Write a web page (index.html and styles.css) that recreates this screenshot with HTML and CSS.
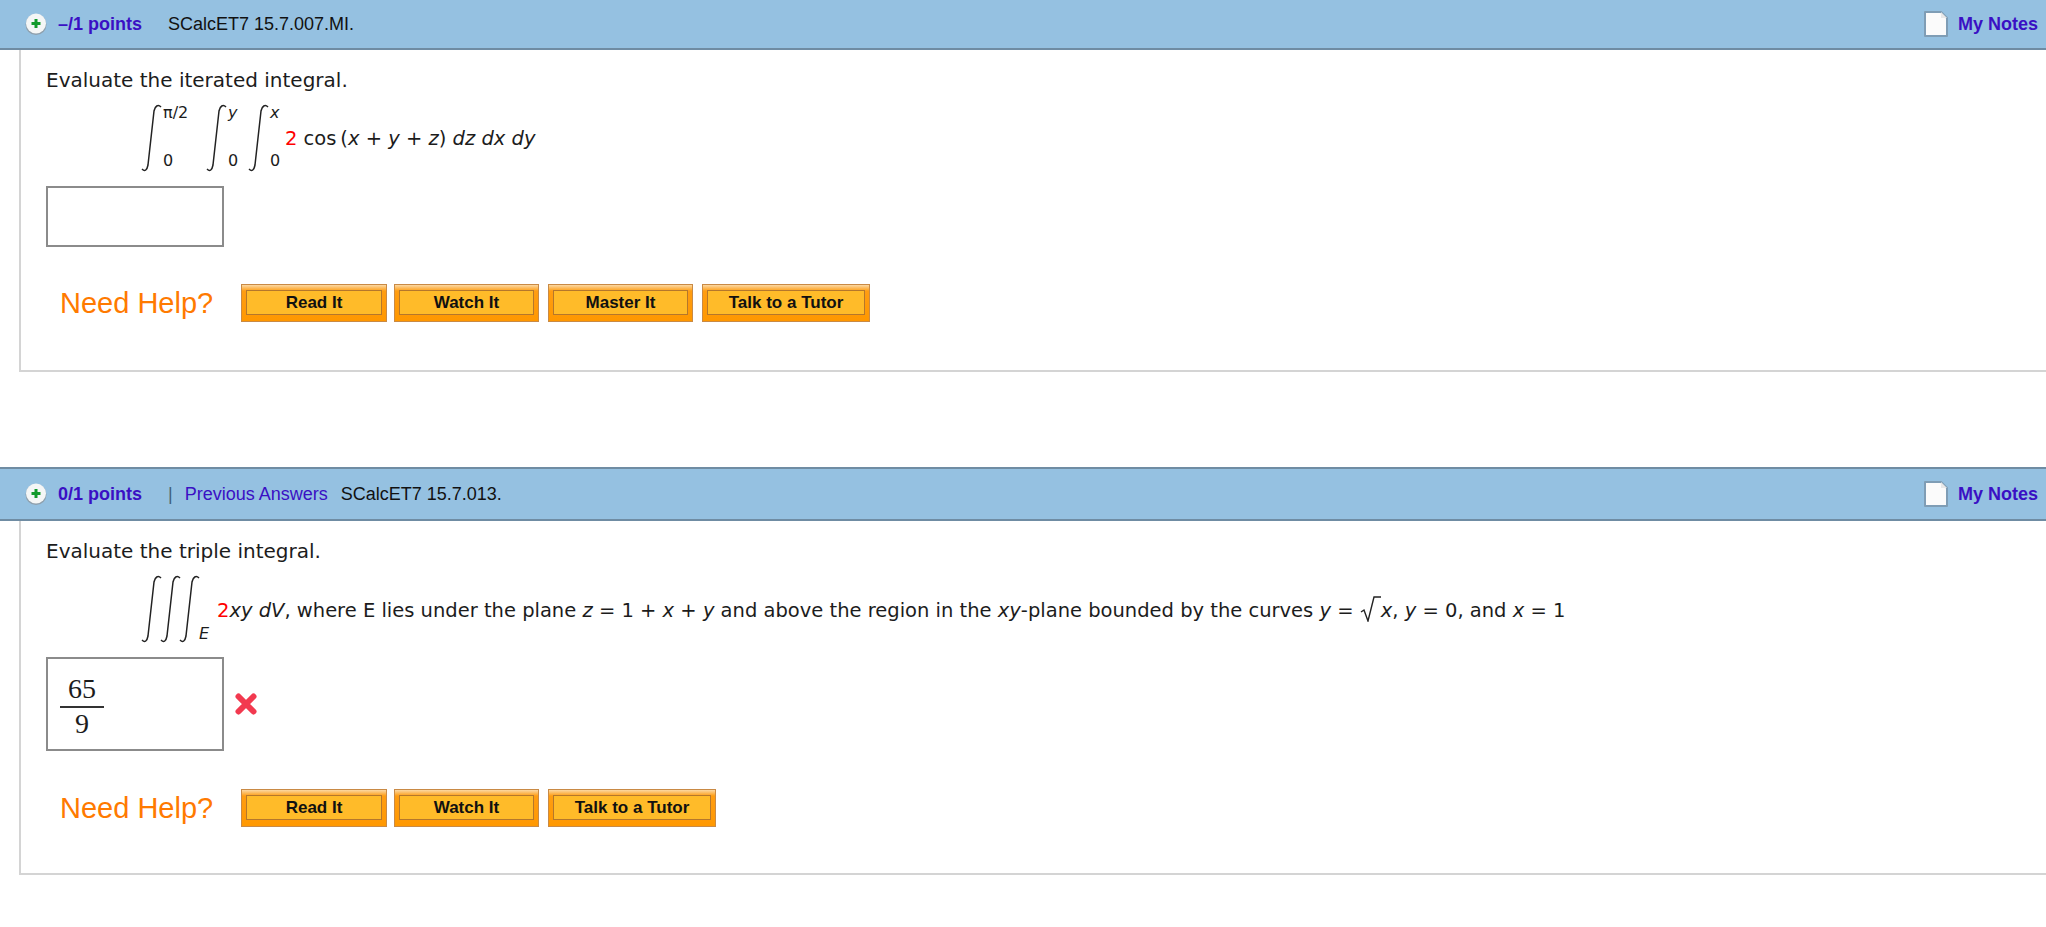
FILE: index.html
```html
<!DOCTYPE html>
<html lang="en">
<head>
    <meta charset="UTF-8">
    <title>Iterated integrals</title>
    <link rel="stylesheet" href="styles.css">
</head>
<body>

<div class="question first">
    <div class="q-head">
        <svg class="plus" width="24" height="24" viewBox="0 0 24 24"><circle cx="12" cy="12.5" r="10.5" fill="#8fa0ad"/><circle cx="12" cy="11.5" r="10" fill="#f4f6f6"/><path d="M12 7v9M7.5 11.5h9" stroke="#129a2c" stroke-width="3"/></svg>
        <span class="points">&ndash;/1 points</span>
        <span class="code">SCalcET7 15.7.007.MI.</span>
        <a class="notes">
            <svg width="26" height="28" viewBox="0 0 26 28"><path d="M2 2h16l6 6v18H2z" fill="#fbfbfb" stroke="#7f9db5" stroke-width="2" stroke-linejoin="round"/><path d="M18 2v6h6" fill="#e8e8e8"/></svg>
            My Notes
        </a>
    </div>
    <div class="q-body">
        <p class="prompt">Evaluate the iterated integral.</p>
        <div class="math m1">
            <div class="integral">
                <svg class="sign" width="22" height="68" viewBox="0 0 22 68"><path d="M1 65c3 3 5 1 6-4l6-54c1-5 4-7 7-4" fill="none" stroke="#222" stroke-width="1.5"/></svg>
                <div class="limits w1"><span class="up">&pi;/2</span><span>0</span></div>
            </div>
            <div class="integral">
                <svg class="sign" width="22" height="68" viewBox="0 0 22 68"><path d="M1 65c3 3 5 1 6-4l6-54c1-5 4-7 7-4" fill="none" stroke="#222" stroke-width="1.5"/></svg>
                <div class="limits w2"><span class="up"><i>y</i></span><span>0</span></div>
            </div>
            <div class="integral">
                <svg class="sign" width="22" height="68" viewBox="0 0 22 68"><path d="M1 65c3 3 5 1 6-4l6-54c1-5 4-7 7-4" fill="none" stroke="#222" stroke-width="1.5"/></svg>
                <div class="limits w3"><span class="up"><i>x</i></span><span>0</span></div>
            </div>
            <span class="expr"><span class="red">2</span> cos&thinsp;(<i>x</i> + <i>y</i> + <i>z</i>) <i>dz dx dy</i></span>
        </div>
        <div class="answer small"></div>
        <div class="help">
            <span class="help-label">Need Help?</span>
            <a class="btn b-read"><span>Read It</span></a>
            <a class="btn b-watch"><span>Watch It</span></a>
            <a class="btn b-master"><span>Master It</span></a>
            <a class="btn b-talk"><span>Talk to a Tutor</span></a>
        </div>
    </div>
</div>

<div class="question second">
    <div class="q-head">
        <svg class="plus" width="24" height="24" viewBox="0 0 24 24"><circle cx="12" cy="12.5" r="10.5" fill="#8fa0ad"/><circle cx="12" cy="11.5" r="10" fill="#f4f6f6"/><path d="M12 7v9M7.5 11.5h9" stroke="#129a2c" stroke-width="3"/></svg>
        <span class="points">0/1 points</span>
        <span class="sep">|</span>
        <span class="prev">Previous Answers</span>
        <span class="code">SCalcET7 15.7.013.</span>
        <a class="notes">
            <svg width="26" height="28" viewBox="0 0 26 28"><path d="M2 2h16l6 6v18H2z" fill="#fbfbfb" stroke="#7f9db5" stroke-width="2" stroke-linejoin="round"/><path d="M18 2v6h6" fill="#e8e8e8"/></svg>
            My Notes
        </a>
    </div>
    <div class="q-body">
        <p class="prompt">Evaluate the triple integral.</p>
        <div class="math m2">
            <div class="triple">
                <svg class="sign" width="22" height="68" viewBox="0 0 22 68"><path d="M1 65c3 3 5 1 6-4l6-54c1-5 4-7 7-4" fill="none" stroke="#222" stroke-width="1.5"/></svg>
                <svg class="sign" width="22" height="68" viewBox="0 0 22 68"><path d="M1 65c3 3 5 1 6-4l6-54c1-5 4-7 7-4" fill="none" stroke="#222" stroke-width="1.5"/></svg>
                <svg class="sign" width="22" height="68" viewBox="0 0 22 68"><path d="M1 65c3 3 5 1 6-4l6-54c1-5 4-7 7-4" fill="none" stroke="#222" stroke-width="1.5"/></svg>
                <i class="region">E</i>
            </div>
            <span class="expr"><span class="red">2</span><i>xy dV</i>, where E lies under the plane <i>z</i> = 1 + <i>x</i> + <i>y</i> and above the region in the <i>xy</i>-plane bounded by the curves <i>y</i> = <span class="root"><svg width="21" height="26" viewBox="0 0 21 26"><path d="M1 16l3-2 4 11 6-24h7" fill="none" stroke="#222" stroke-width="1.4"/></svg><i>x</i></span>, <i>y</i> = 0, and <i>x</i> = 1</span>
        </div>
        <div class="answer-row">
            <div class="answer tall">
                <div class="frac"><span class="num">65</span><span class="den">9</span></div>
            </div>
            <svg class="wrong" width="24" height="24" viewBox="0 0 24 24"><path d="M4.5 4.5l15 15M19.500 4.500l-15 15" stroke="#f2394f" stroke-width="6" stroke-linecap="round"/></svg>
        </div>
        <div class="help">
            <span class="help-label">Need Help?</span>
            <a class="btn b-read"><span>Read It</span></a>
            <a class="btn b-watch"><span>Watch It</span></a>
            <a class="btn b-talk2"><span>Talk to a Tutor</span></a>
        </div>
    </div>
</div>

</body>
</html>
```

FILE: styles.css
```css
body {
    margin: 0;
    background: #fff;
    color: #1c1c1c;
    font-family: "DejaVu Sans", sans-serif;
    overflow: hidden;
}
.question.second {
    margin-top: 95px;
}
.q-head {
    display: flex;
    align-items: center;
    height: 48px;
    padding-left: 24px;
    background: #95c1e1;
    border-bottom: 2px solid #6f8ca3;
    font-family: "Liberation Sans", Arial, sans-serif;
    font-size: 18px;
}
.second .q-head {
    height: 50px;
    border-top: 2px solid #6f8ca3;
}
.plus {
    margin-right: 10px;
}
.points {
    font-weight: bold;
    color: #3a10c4;
    width: 110px;
}
.sep {
    color: #3f5f7a;
    margin-right: 12px;
}
.prev {
    color: #3a10c4;
    margin-right: 13px;
}
.code {
    color: #111;
}
.notes {
    margin-left: auto;
    margin-right: 8px;
    display: flex;
    align-items: center;
    gap: 9px;
    font-weight: bold;
    color: #3a10c4;
}
.q-body {
    margin-left: 19px;
    border-left: 2px solid #d4d4d4;
    border-bottom: 2px solid #d4d4d4;
    padding: 15px 0 0 25px;
    height: 306px;
    box-sizing: border-box;
    overflow: hidden;
}
.first .q-body {
    height: 322px;
}
.second .q-body {
    height: 354px;
}
.prompt {
    margin: 0;
    font-size: 20px;
    line-height: 30px;
}
.math {
    display: flex;
    align-items: center;
    padding-left: 95px;
    margin-top: 7px;
    height: 72px;
}
.integral {
    display: flex;
}
.sign {
    display: block;
}
.limits {
    display: flex;
    flex-direction: column;
    justify-content: space-between;
    height: 66px;
    font-size: 16px;
    line-height: 18px;
}
.w1 { width: 43px; }
.w2 { width: 20px; }
.w3 { width: 13px; }
.expr {
    font-size: 19.500px;
    white-space: nowrap;
    margin-left: 2px;
}
.red {
    color: #f00;
}
.answer {
    border: 2px solid #8b8b8b;
    box-sizing: border-box;
    width: 178px;
    background: #fff;
}
.answer.small {
    height: 61px;
    margin-top: 12px;
}
.answer.tall {
    height: 94px;
    padding: 14px 0 0 12px;
}
.triple {
    display: flex;
    position: relative;
    width: 74px;
}
.triple .sign {
    margin-right: -3px;
}
.region {
    font-size: 16px;
    align-self: flex-end;
    margin-left: 1px;
}
.root {
    display: inline-flex;
    align-items: flex-end;
    vertical-align: bottom;
}
.root i {
    border-top: 0;
}
.answer-row {
    display: flex;
    align-items: center;
    gap: 10px;
    margin-top: 12px;
}
.frac {
    display: flex;
    flex-direction: column;
    align-items: center;
    width: 44px;
    font-family: "Liberation Serif", serif;
    font-size: 28px;
    line-height: 32px;
}
.num {
    width: 100%;
    text-align: center;
    border-bottom: 2px solid #333;
    padding-bottom: 1px;
}
.help {
    display: flex;
    align-items: center;
    margin-top: 37px;
    padding-left: 14px;
}
.second .help {
    margin-top: 38px;
}
.help-label {
    font-family: "Liberation Sans", Arial, sans-serif;
    font-size: 29px;
    color: #ff7a00;
    width: 181px;
}
.btn {
    display: block;
    box-sizing: border-box;
    height: 38px;
    padding: 5px 4px 6px;
    margin-right: 7px;
    background: linear-gradient(#fbd8a4 0, #ff9d12 6px, #ff9800 100%);
    border: 1px solid #c98a45;
    font-family: "Liberation Sans", Arial, sans-serif;
    font-size: 17px;
    font-weight: bold;
    color: #111;
}
.btn span {
    display: block;
    height: 100%;
    box-sizing: border-box;
    background: #ffbb29;
    border: 1px solid #b5772b;
    text-align: center;
    line-height: 23px;
}
.b-read { width: 146px; }
.b-watch { width: 145px; margin-right: 9px; }
.b-master { width: 145px; margin-right: 9px; }
.b-talk, .b-talk2 { width: 168px; }
```
